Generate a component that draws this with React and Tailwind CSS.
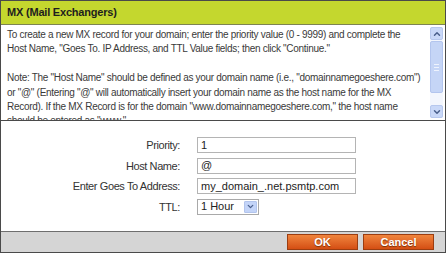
import { ChevronDown, ChevronUp } from 'lucide-react';

const FONT = { fontFamily: '"Liberation Sans", Arial, sans-serif' };

function ScrollBar() {
  return (
    <div className="w-[13px] shrink-0 flex flex-col my-[2px] mr-[2px] bg-[#f3f6fd]">
      <div className="h-[13px] flex items-center justify-center bg-[#c9d8f8] border border-[#b7c8ee] rounded-[2px]">
        <ChevronUp className="w-[10px] h-[10px] text-[#4a5f8c]" strokeWidth={3.5} />
      </div>
      <div className="h-[52px] mt-[1px] bg-[#c5d5f6] border border-[#b3c5ee] rounded-[2px] flex flex-col items-center justify-center gap-[2px]">
        <div className="w-[5px] h-px bg-[#eef3fd]" />
        <div className="w-[5px] h-px bg-[#eef3fd]" />
        <div className="w-[5px] h-px bg-[#eef3fd]" />
      </div>
      <div className="flex-1" />
      <div className="h-[13px] flex items-center justify-center bg-[#c9d8f8] border border-[#b7c8ee] rounded-[2px]">
        <ChevronDown className="w-[10px] h-[10px] text-[#4a5f8c]" strokeWidth={3.5} />
      </div>
    </div>
  );
}

function Field({ label, children }) {
  return (
    <>
      <label className="text-right text-[11px] tracking-[-0.4px] text-[#333] leading-[16px]">{label}</label>
      <div className="h-[16px] flex">{children}</div>
    </>
  );
}

function TextInput({ value, width = 'w-[159px]' }) {
  return (
    <input
      readOnly
      value={value}
      style={FONT}
      className={`${width} h-[16px] border border-[#b4b4b4] px-[3px] text-[11px] text-[#222] outline-none`}
    />
  );
}

export default function App() {
  return (
    <div style={FONT} className="w-[446px] h-[253px] border border-[#4a4a4a] flex flex-col bg-white overflow-hidden">
      <div className="h-[24px] shrink-0 bg-[#c4d72e] border-b border-[#7d8451] flex items-center px-[6px]">
        <span className="text-[11px] font-bold text-[#1e1e1e] tracking-[-0.2px]">MX (Mail Exchangers)</span>
      </div>

      <div className="h-[96px] shrink-0 flex border-b border-[#4a4a4a]">
        <div className="flex-1 overflow-hidden pl-[6px] pt-[3px] text-[10px] leading-[14.4px] text-[#3a3a3a] whitespace-nowrap tracking-[-0.3px]">
          <div>To create a new MX record for your domain; enter the priority value (0 - 9999) and complete the</div>
          <div>Host Name, "Goes To. IP Address, and TTL Value fields; then click "Continue."</div>
          <div>&nbsp;</div>
          <div>Note: The "Host Name" should be defined as your domain name (i.e., "domainnamegoeshere.com")</div>
          <div>or "@" (Entering "@" will automatically insert your domain name as the host name for the MX</div>
          <div>Record). If the MX Record is for the domain "www.domainnamegoeshere.com," the host name</div>
          <div>should be entered as "www."</div>
        </div>
        <ScrollBar />
      </div>

      <div className="flex-1 pt-[16px]">
        <div className="grid grid-cols-[179px_auto] gap-x-[17px] gap-y-[4.5px] items-center">
          <Field label="Priority:">
            <TextInput value="1" />
          </Field>
          <Field label="Host Name:">
            <TextInput value="@" />
          </Field>
          <Field label="Enter Goes To Address:">
            <TextInput value="my_domain_.net.psmtp.com" />
          </Field>
          <Field label="TTL:">
            <div className="w-[62px] h-[16px] border border-[#a9a9a9] flex items-center">
              <span className="flex-1 pl-[3px] text-[11px] text-[#222]">1 Hour</span>
              <div className="w-[13px] h-[12px] mr-[1px] bg-[#c3d4f8] border border-[#b2c4ec] rounded-[1px] flex items-center justify-center">
                <ChevronDown className="w-[9px] h-[9px] text-[#4a5f8c]" strokeWidth={3.5} />
              </div>
            </div>
          </Field>
        </div>
      </div>

      <div className="h-[21px] shrink-0 bg-[#d5d5d5] border-t border-[#6e6e6e] flex items-center justify-end gap-[5px] pr-[11px]">
        <button className="w-[71px] h-[16px] bg-gradient-to-b from-[#f0843c] to-[#d44e12] border border-[#9c3d10] text-white text-[11px] font-bold leading-none [text-shadow:0_1px_1px_#7a3008]">
          OK
        </button>
        <button className="w-[71px] h-[16px] bg-gradient-to-b from-[#f0843c] to-[#d44e12] border border-[#9c3d10] text-white text-[11px] font-bold leading-none [text-shadow:0_1px_1px_#7a3008]">
          Cancel
        </button>
      </div>
    </div>
  );
}
